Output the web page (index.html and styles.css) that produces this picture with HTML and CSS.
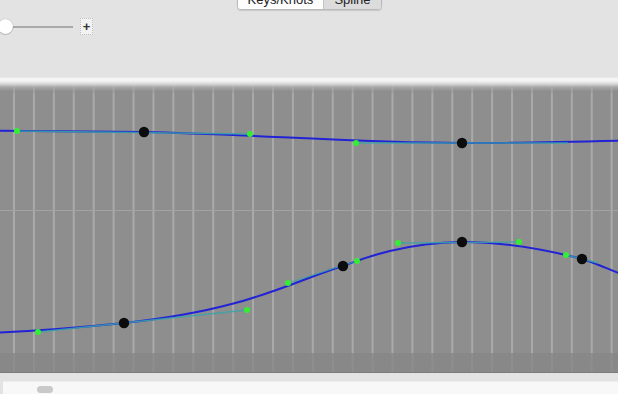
FILE: index.html
```html
<!DOCTYPE html>
<html lang="en">
<head>
  <meta charset="UTF-8" />
  <title>Spline Editor</title>
  <link rel="stylesheet" href="styles.css">
</head>
<body>

<div class="toolbar">
  <div class="segmented">
    <span class="seg">Keys/Knots</span>
    <span class="seg on">Spline</span>
  </div>
  <div class="zoom-row">
    <div class="slider"><span class="knob"></span></div>
    <span class="plus">+</span>
  </div>
</div>

<div class="plot">
  <svg class="curves" width="618" height="276" viewBox="0 77 618 276">
    <!-- upper spline -->
    <path class="curve" d="M -150 130 C -50 130, 17 131, 144 132 C 250 134, 356 143, 462 143 C 568 143, 650 139, 760 138" />
    <!-- lower spline -->
    <path class="curve" d="M -100 336 C -40 335, 38 332, 124 323 C 247 310, 288 283, 343 266 C 357 261, 398 243, 462 242 C 519 242, 566 255, 582 259 C 598 263, 640 285, 700 300" />

    <!-- tangents -->
    <line class="tan" x1="17" y1="131" x2="250" y2="134" />
    <line class="tan" x1="356" y1="143" x2="568" y2="143" />
    <line class="tan" x1="38" y1="332" x2="247" y2="310" />
    <line class="tan" x1="288" y1="283" x2="357" y2="261" />
    <line class="tan" x1="398" y1="243" x2="519" y2="242" />
    <line class="tan" x1="566" y1="255" x2="598" y2="263" />

    <!-- handles -->
    <circle class="handle" cx="17" cy="131" r="3" />
    <circle class="handle" cx="250" cy="134" r="3" />
    <circle class="handle" cx="356" cy="143" r="3" />
    <circle class="handle" cx="38" cy="332" r="3" />
    <circle class="handle" cx="247" cy="310" r="3" />
    <circle class="handle" cx="288" cy="283" r="3" />
    <circle class="handle" cx="357" cy="261" r="3" />
    <circle class="handle" cx="398" cy="243" r="3" />
    <circle class="handle" cx="519" cy="242" r="3" />
    <circle class="handle" cx="566" cy="255" r="3" />

    <!-- knots -->
    <circle class="knot" cx="144" cy="132" r="5.2" />
    <circle class="knot" cx="462" cy="143" r="5.2" />
    <circle class="knot" cx="124" cy="323" r="5.2" />
    <circle class="knot" cx="343" cy="266" r="5.2" />
    <circle class="knot" cx="462" cy="242" r="5.2" />
    <circle class="knot" cx="582" cy="259" r="5.2" />
  </svg>
</div>
<div class="plot-foot"></div>

<div class="hscroll">
  <div class="track"><span class="thumb"></span></div>
</div>

</body>
</html>
```

FILE: styles.css
```css
* {
  box-sizing: border-box;
}
body {
  margin: 0;
  width: 618px;
  height: 394px;
  overflow: hidden;
  font-family: "Liberation Sans", Arial, sans-serif;
  background-color: #e3e3e3;
  color: #222;
}

/* Barra superior */
.toolbar {
  display: flow-root;
  height: 77px;
  background-color: #e3e3e3;
}
.segmented {
  display: flex;
  width: 145px;
  height: 20px;
  margin: -10px auto 0;
  border: 1px solid #b9b9b9;
  border-radius: 4px;
  overflow: hidden;
  box-shadow: 0 1px 1px rgba(0,0,0,0.12);
  font-size: 13px;
  line-height: 18px;
}
.seg {
  background-color: #fdfdfd;
  padding: 0 10px;
  width: 87px;
  text-align: center;
}
.seg.on {
  background-color: #dcdcdc;
  border-left: 1px solid #c4c4c4;
  width: 58px;
  padding: 0;
}
.zoom-row {
  display: flex;
  align-items: center;
  gap: 7px;
  margin-top: 8px;
  margin-left: -2px;
}
.slider {
  display: flex;
  align-items: center;
  width: 75px;
  height: 16px;
  background: linear-gradient(#a9a9a9, #a9a9a9) no-repeat 8px 7px / 67px 2px;
}
.knob {
  width: 15px;
  height: 15px;
  border-radius: 50%;
  background-color: #fff;
  box-shadow: 0 0 1px rgba(0,0,0,0.4), 0 1px 1px rgba(0,0,0,0.15);
}
.plus {
  width: 13px;
  height: 17px;
  border: 1px dotted #bdbdbd;
  background-color: #f2f2f2;
  font-size: 13px;
  font-weight: bold;
  line-height: 15px;
  text-align: center;
  color: #333;
}

/* Zona del gráfico */
.plot {
  height: 276px;
  background:
    linear-gradient(to bottom, #e6e6e6 0, #f7f7f7 2px, #f3f3f3 4px, #d6d6d6 7px, rgba(172,172,172,0.85) 10px, rgba(142,142,142,0.35) 14px, rgba(142,142,142,0) 18px) no-repeat 0 0 / 100% 18px,
    linear-gradient(#a3a3a3, #a3a3a3) no-repeat 0 133px / 100% 1px,
    linear-gradient(to right, #a4a4a4 0, #b0b0b0 1px, #a4a4a4 2px, transparent 2px) repeat-x 13px 0 / 19.93px 100%,
    #8e8e8e;
}
.curves {
  display: block;
}
.curve {
  fill: none;
  stroke: #2323d6;
  stroke-width: 2;
}
.tan {
  stroke: #3aa4a8;
  stroke-width: 1.3;
  opacity: 0.85;
}
.handle {
  fill: #33ee33;
}
.knot {
  fill: #0c0c0c;
}
.plot-foot {
  height: 19px;
  background:
    linear-gradient(to right, #8e8e8e 0, #8e8e8e 2px, transparent 2px) repeat-x 13px 0 / 19.93px 100%,
    #888;
}

/* Barra de desplazamiento */
.hscroll {
  border-top: 1px solid #7b7b7b;
  padding-top: 8px;
  background-color: #e3e3e3;
}
.track {
  height: 13px;
  margin-left: 3px;
  background-color: #f8f8f8;
  border-top: 1px solid #ececec;
  padding: 4px 0 0 34px;
}
.thumb {
  display: block;
  width: 16px;
  height: 7px;
  border-radius: 4px;
  background-color: #c9c9c9;
}
```
